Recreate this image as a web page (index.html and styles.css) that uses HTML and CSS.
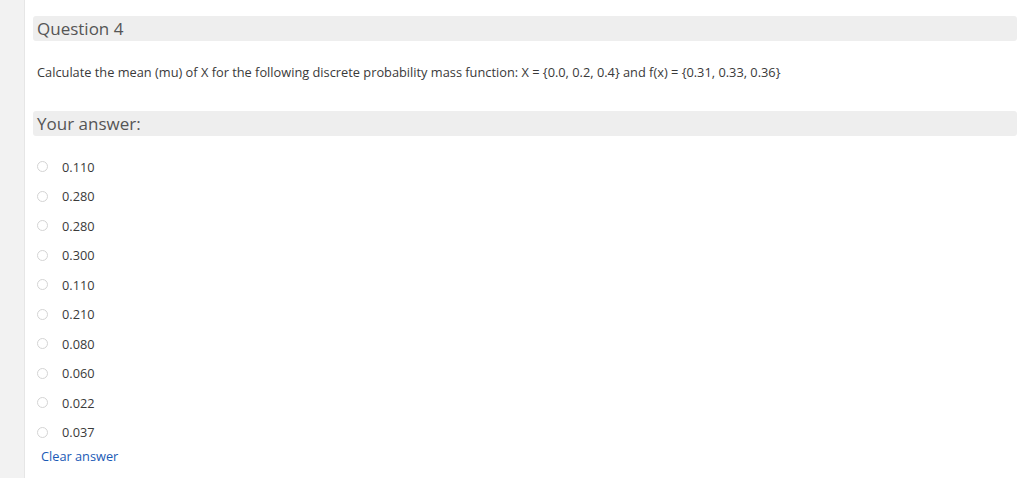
FILE: index.html
```html
<!DOCTYPE html>
<html>
<head>
<meta charset="utf-8">
<link rel="stylesheet" href="styles.css">
</head>
<body>
<div class="page">
  <div class="sidebar"></div>
  <main class="main">
    <div class="qhead">Question 4</div>
    <p class="qtext">Calculate the mean (mu) of X for the following discrete probability mass function: X = {0.0, 0.2, 0.4} and f(x) = {0.31, 0.33, 0.36}</p>
    <div class="ahead">Your answer:</div>
    <ul class="options">
      <li class="opt"><span class="radio"></span><span>0.110</span></li>
      <li class="opt"><span class="radio"></span><span>0.280</span></li>
      <li class="opt"><span class="radio"></span><span>0.280</span></li>
      <li class="opt"><span class="radio"></span><span>0.300</span></li>
      <li class="opt"><span class="radio"></span><span>0.110</span></li>
      <li class="opt"><span class="radio"></span><span>0.210</span></li>
      <li class="opt"><span class="radio"></span><span>0.080</span></li>
      <li class="opt"><span class="radio"></span><span>0.060</span></li>
      <li class="opt"><span class="radio"></span><span>0.022</span></li>
      <li class="opt"><span class="radio"></span><span>0.037</span></li>
    </ul>
    <a class="clear" href="#">Clear answer</a>
  </main>
</div>
</body>
</html>
```
FILE: styles.css
```css
html, body {
  margin: 0;
  padding: 0;
  background: #fff;
  font-family: "Open Sans", "Liberation Sans", sans-serif;
  color: #333;
}
.page {
  display: flex;
  min-height: 478px;
}
.sidebar {
  width: 24px;
  flex: none;
  background: #f2f2f2;
  border-right: 1px solid #e6e6e6;
}
.main {
  flex: 1;
  padding: 16px 7px 0 8px;
}
.qhead, .ahead {
  background: #eeeeee;
  border-radius: 3px;
  height: 25px;
  line-height: 25px;
  padding-left: 4px;
  font-size: 17px;
  color: #555;
}
.qtext {
  margin: 21px 0 0 4px;
  font-size: 12.8px;
  line-height: 20px;
  color: #3a3a3a;
}
.ahead {
  margin-top: 29px;
}
.options {
  list-style: none;
  margin: 16px 0 0 0;
  padding: 0;
}
.opt {
  display: flex;
  align-items: center;
  height: 29.5px;
  font-size: 12.75px;
  color: #3a3a3a;
}
.radio {
  width: 9px;
  height: 9px;
  border: 1px solid #d4d4d4;
  border-radius: 50%;
  margin-left: 4px;
  margin-right: 14px;
}
.clear {
  display: block;
  margin-left: 8px;
  font-size: 12.75px;
  line-height: 18px;
  color: #1a5ab6;
  text-decoration: none;
}
```
